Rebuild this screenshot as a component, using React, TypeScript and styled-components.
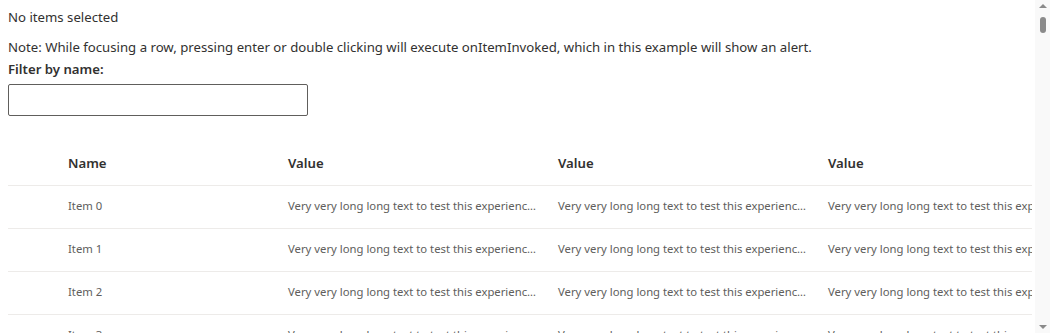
import React from "react";
import styled, { createGlobalStyle } from "styled-components";

const Global = createGlobalStyle`
  html, body { margin: 0; padding: 0; background: #ffffff; }
  body {
    font-family: "Noto Sans", "Open Sans", sans-serif;
    color: #323130;
    -webkit-font-smoothing: antialiased;
    overflow: hidden;
  }
  * { box-sizing: border-box; }
`;

const Page = styled.div`
  display: flex;
  height: 333px;
  width: 1050px;
`;

const Main = styled.main`
  flex: 1;
  min-width: 0;
  overflow: hidden;
  padding: 7px 3px 8px 8px;
`;

const ScrollBar = styled.div`
  width: 15px;
  flex: none;
  background: #f9f9f9;
  display: flex;
  flex-direction: column;
  align-items: center;
  padding: 4px 0 4px 1px;
`;

const Arrow = styled.div<{ $down?: boolean }>`
  width: 0;
  height: 0;
  border-left: 4px solid transparent;
  border-right: 4px solid transparent;
  ${(p) => (p.$down ? "border-top: 4px solid #8a8a8a;" : "border-bottom: 4px solid #8a8a8a;")}
  margin-top: ${(p) => (p.$down ? "auto" : "0")};
`;

const Thumb = styled.div`
  width: 6px;
  height: 16px;
  border-radius: 3px;
  background: #8a8a8a;
  margin-top: 9px;
`;

const Line = styled.div<{ $top?: number }>`
  font-size: 13.2px;
  line-height: 20px;
  margin-top: ${(p) => p.$top ?? 0}px;
  white-space: nowrap;
`;

const Label = styled.label`
  display: block;
  font-size: 13.2px;
  font-weight: 600;
  line-height: 20px;
  padding: 2px 0 5px;
`;

const Input = styled.input`
  display: block;
  width: 300px;
  height: 32px;
  border: 1px solid #605e5c;
  border-radius: 2px;
  padding: 0 8px;
  font: inherit;
  font-size: 14px;
  outline: none;
  background: #fff;
`;

const List = styled.div`
  overflow: hidden;
  padding-top: 27px;
`;

const Row = styled.div<{ $header?: boolean }>`
  display: grid;
  grid-template-columns: 48px 220px 270px 270px 270px;
  width: 1078px;
  height: 43px;
  border-bottom: 1px solid #edebe9;
  align-items: center;
  font-size: ${(p) => (p.$header ? 13.2 : 11.3)}px;
  font-weight: ${(p) => (p.$header ? 600 : 400)};
  color: ${(p) => (p.$header ? "#323130" : "#605e5c")};
`;

const Cell = styled.div`
  padding: 0 8px 2px 12px;
  white-space: nowrap;
  overflow: hidden;
  text-overflow: ellipsis;
  line-height: 20px;
`;

const CheckCell = styled.div``;

const longText = "Very very long long text to test this experience with a long text";

const items = Array.from({ length: 6 }, (_, i) => ({
  name: `Item ${i}`,
}));

export default function App() {
  return (
    <>
      <Global />
      <Page>
        <Main>
          <Line>No items selected</Line>
          <Line $top={10}>
            Note: While focusing a row, pressing enter or double clicking will execute onItemInvoked, which
            in this example will show an alert.
          </Line>
          <Label htmlFor="filter">Filter by name:</Label>
          <Input id="filter" />
          <List>
            <Row $header>
              <CheckCell />
              <Cell>Name</Cell>
              <Cell>Value</Cell>
              <Cell>Value</Cell>
              <Cell>Value</Cell>
            </Row>
            {items.map((it) => (
              <Row key={it.name}>
                <CheckCell />
                <Cell>{it.name}</Cell>
                <Cell>{longText}</Cell>
                <Cell>{longText}</Cell>
                <Cell>{longText}</Cell>
              </Row>
            ))}
          </List>
        </Main>
        <ScrollBar>
          <Arrow />
          <Thumb />
          <Arrow $down />
        </ScrollBar>
      </Page>
    </>
  );
}
